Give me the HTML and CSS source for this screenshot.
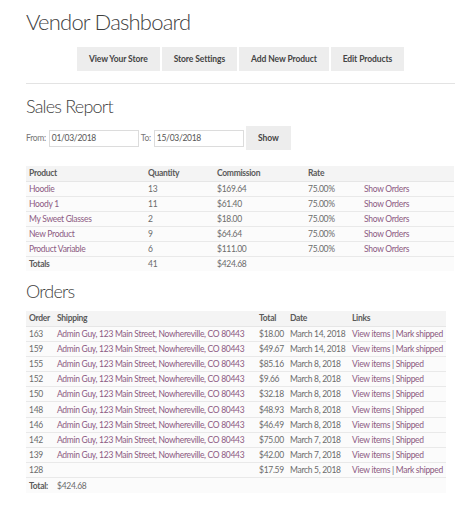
FILE: index.html
```html
<!DOCTYPE html>
<html>
<head>
<meta charset="utf-8">
<link rel="stylesheet" href="styles.css">
</head>
<body>
<div class="page">
  <h1 class="title">Vendor Dashboard</h1>
  <nav class="actions">
    <a class="btn">View Your Store</a>
    <a class="btn">Store Settings</a>
    <a class="btn">Add New Product</a>
    <a class="btn">Edit Products</a>
  </nav>
  <hr class="rule">
  <h2 class="section">Sales Report</h2>
  <form class="range">
    <label class="lbl">From:</label>
    <span class="field">01/03/2018</span>
    <label class="lbl">To:</label>
    <span class="field">15/03/2018</span>
    <span class="btn show">Show</span>
  </form>
  <table class="report sales">
    <thead>
      <tr><th class="c-prod">Product</th><th class="c-qty">Quantity</th><th class="c-com">Commission</th><th class="c-rate">Rate</th><th></th></tr>
    </thead>
    <tbody>
      <tr><td><a>Hoodie</a></td><td>13</td><td>$169.64</td><td>75.00%</td><td><a>Show Orders</a></td></tr>
      <tr><td><a>Hoody 1</a></td><td>11</td><td>$61.40</td><td>75.00%</td><td><a>Show Orders</a></td></tr>
      <tr><td><a>My Sweet Glasses</a></td><td>2</td><td>$18.00</td><td>75.00%</td><td><a>Show Orders</a></td></tr>
      <tr><td><a>New Product</a></td><td>9</td><td>$64.64</td><td>75.00%</td><td><a>Show Orders</a></td></tr>
      <tr><td><a>Product Variable</a></td><td>6</td><td>$111.00</td><td>75.00%</td><td><a>Show Orders</a></td></tr>
      <tr class="tot"><th>Totals</th><td>41</td><td>$424.68</td><td></td><td></td></tr>
    </tbody>
  </table>
  <h2 class="section orders-h">Orders</h2>
  <table class="report orders">
    <thead>
      <tr><th class="o-id">Order</th><th class="o-ship">Shipping</th><th class="o-tot">Total</th><th class="o-date">Date</th><th>Links</th></tr>
    </thead>
    <tbody>
      <tr><td>163</td><td><a>Admin Guy, 123 Main Street, Nowhereville, CO 80443</a></td><td>$18.00</td><td>March 14, 2018</td><td><a>View items</a> | <a>Mark shipped</a></td></tr>
      <tr><td>159</td><td><a>Admin Guy, 123 Main Street, Nowhereville, CO 80443</a></td><td>$49.67</td><td>March 14, 2018</td><td><a>View items</a> | <a>Mark shipped</a></td></tr>
      <tr><td>155</td><td><a>Admin Guy, 123 Main Street, Nowhereville, CO 80443</a></td><td>$85.16</td><td>March 8, 2018</td><td><a>View items</a> | <a>Shipped</a></td></tr>
      <tr><td>152</td><td><a>Admin Guy, 123 Main Street, Nowhereville, CO 80443</a></td><td>$9.66</td><td>March 8, 2018</td><td><a>View items</a> | <a>Shipped</a></td></tr>
      <tr><td>150</td><td><a>Admin Guy, 123 Main Street, Nowhereville, CO 80443</a></td><td>$32.18</td><td>March 8, 2018</td><td><a>View items</a> | <a>Shipped</a></td></tr>
      <tr><td>148</td><td><a>Admin Guy, 123 Main Street, Nowhereville, CO 80443</a></td><td>$48.93</td><td>March 8, 2018</td><td><a>View items</a> | <a>Shipped</a></td></tr>
      <tr><td>146</td><td><a>Admin Guy, 123 Main Street, Nowhereville, CO 80443</a></td><td>$46.49</td><td>March 8, 2018</td><td><a>View items</a> | <a>Shipped</a></td></tr>
      <tr><td>142</td><td><a>Admin Guy, 123 Main Street, Nowhereville, CO 80443</a></td><td>$75.00</td><td>March 7, 2018</td><td><a>View items</a> | <a>Shipped</a></td></tr>
      <tr><td>139</td><td><a>Admin Guy, 123 Main Street, Nowhereville, CO 80443</a></td><td>$42.00</td><td>March 7, 2018</td><td><a>View items</a> | <a>Shipped</a></td></tr>
      <tr><td>128</td><td></td><td>$17.59</td><td>March 5, 2018</td><td><a>View items</a> | <a>Mark shipped</a></td></tr>
      <tr class="tot last"><th>Total:</th><td>$424.68</td><td></td><td></td><td></td></tr>
    </tbody>
  </table>
</div>
</body>
</html>
```

FILE: styles.css
```css
body {
  margin: 0;
  background: #ffffff;
  font-family: Lato, "Noto Sans", sans-serif;
  color: #6b6b6b;
  font-size: 8.5px;
  letter-spacing: -0.3px;
}
.page {
  width: 429px;
  padding: 8px 0 0 26px;
}
.title {
  margin: 0;
  font-size: 22px;
  font-weight: 300;
  letter-spacing: -0.8px;
  line-height: 28px;
  color: #3f3f3f;
}
.actions {
  display: flex;
  justify-content: center;
  gap: 2px;
  margin-top: 11px;
}
.btn {
  display: flex;
  align-items: center;
  justify-content: center;
  height: 24px;
  padding: 0 12px;
  background: #ededed;
  color: #444444;
  font-weight: 700;
  letter-spacing: -0.1px;
}
.rule {
  margin: 12px 0 0;
  border: 0;
  border-top: 1px solid #e3e3e3;
}
.section {
  margin: 10px 0 0;
  font-size: 18px;
  font-weight: 300;
  letter-spacing: -0.8px;
  line-height: 24px;
  color: #3f3f3f;
}
.range {
  display: flex;
  align-items: center;
  margin: 8px 0 0;
}
.lbl {
  color: #777;
  margin-right: 3px;
}
.field {
  box-sizing: border-box;
  width: 90px;
  height: 17px;
  padding: 0 2px;
  border: 1px solid #dcdcdc;
  color: #555;
  display: flex;
  align-items: center;
  margin-right: 2px;
}
.show {
  height: 24px;
  width: 45px;
  padding: 0;
  box-sizing: border-box;
  margin-left: 0;
}
.report {
  border-collapse: collapse;
  table-layout: fixed;
  background: #fbfbfb;
}
.report th, .report td {
  box-sizing: border-box;
  height: 15px;
  padding: 0 3px;
  text-align: left;
  white-space: nowrap;
  border-bottom: 1px solid #e9e9e9;
  line-height: 14px;
}
.report th {
  font-weight: 700;
  color: #5a5a5a;
}
.report thead th {
  background: #f4f4f4;
  border-bottom-color: #e6e6e6;
}
.report a {
  color: #8c5a82;
}
.report .tot th, .report .tot td {
  border-bottom: 0;
}
.sales {
  width: 428px;
  margin-top: 16px;
}
.c-prod { width: 119px; }
.c-qty { width: 69px; }
.c-com { width: 91px; }
.c-rate { width: 56px; }
.orders-h {
  margin-top: 8px;
}
.orders {
  width: 420px;
  margin-top: 8px;
}
.orders tbody td, .orders tbody th {
  height: 15.2px;
}
.o-id { width: 28px; }
.o-ship { width: 202px; }
.o-tot { width: 31px; }
.o-date { width: 62px; }
```
